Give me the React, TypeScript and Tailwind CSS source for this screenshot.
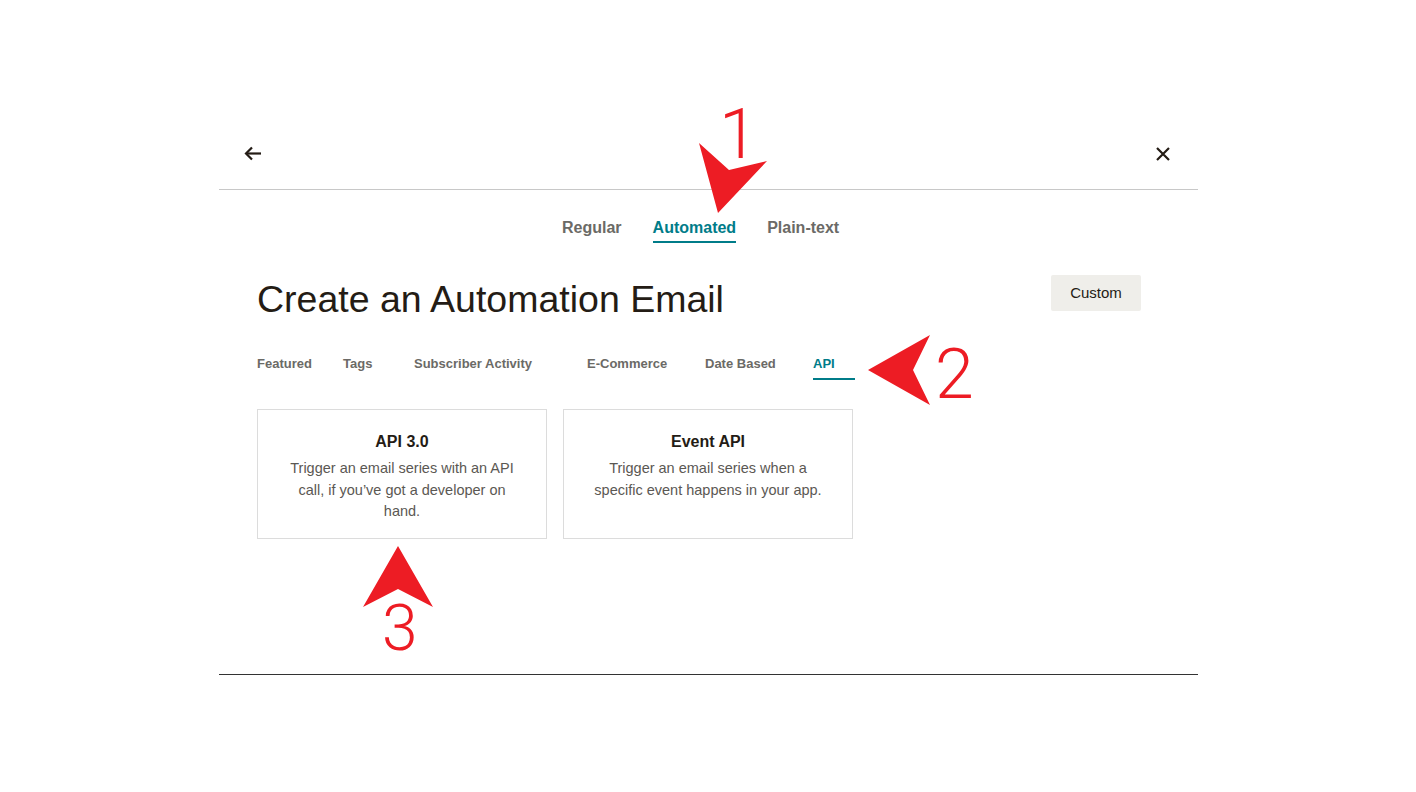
import React from 'react';

const font = { fontFamily: '"Liberation Sans", Arial, sans-serif' };

export default function App() {
  const mainTabs = [
    { name: 'Regular', active: false },
    { name: 'Automated', active: true },
    { name: 'Plain-text', active: false },
  ];

  const subTabs = [
    { name: 'Featured', width: 'w-[86px]' },
    { name: 'Tags', width: 'w-[71px]' },
    { name: 'Subscriber Activity', width: 'w-[173px]' },
    { name: 'E-Commerce', width: 'w-[118px]' },
    { name: 'Date Based', width: 'w-[108px]' },
  ];

  const cards = [
    { title: 'API 3.0', lines: ['Trigger an email series with an API', 'call, if you\u2019ve got a developer on', 'hand.'] },
    { title: 'Event API', lines: ['Trigger an email series when a', 'specific event happens in your app.'] },
  ];

  return (
    <div className="relative min-h-screen w-full bg-white" style={font}>
      <div className="ml-[219px] w-[979px] pt-[118px]">
        {/* header */}
        <div className="flex h-[72px] items-center justify-between border-b border-[#c8c8c8] pl-[25px] pr-[28px]">
          <button className="text-[#241c15]">
            <svg width="17" height="15" viewBox="0 0 17 15" fill="none" stroke="currentColor" strokeWidth="2.2">
              <path d="M2 7.5h15" />
              <path d="M8 1.5L2 7.5l6 6" />
            </svg>
          </button>
          <button className="text-[#241c15]">
            <svg width="14" height="14" viewBox="0 0 14 14" fill="none" stroke="currentColor" strokeWidth="2.2">
              <path d="M1 1l12 12M13 1L1 13" />
            </svg>
          </button>
        </div>

        {/* main tabs */}
        <div className="mt-[28px] flex gap-[31px] pl-[343px]">
          {mainTabs.map((t) => (
            <div
              key={t.name}
              className={`border-b-2 pb-[3px] text-[16px] font-bold leading-[20px] ${
                t.active ? 'border-[#007c89] text-[#007c89]' : 'border-transparent text-[#6b6a66]'
              }`}
            >
              {t.name}
            </div>
          ))}
        </div>

        {/* heading row */}
        <div className="mt-[32px] flex items-start justify-between pl-[38px] pr-[57px]">
          <h1 className="mt-[2px] text-[37.5px] font-normal leading-[44px] text-[#241c15]">Create an Automation Email</h1>
          <button className="h-[36px] w-[90px] rounded-[2px] bg-[#efeeea] text-[15px] text-[#241c15]">Custom</button>
        </div>

        {/* sub tabs */}
        <div className="mt-[34px] flex pl-[38px]">
          {subTabs.map((t) => (
            <div key={t.name} className={`${t.width} pb-[5px] text-[13px] font-bold leading-[18px] text-[#6b6a66]`}>
              {t.name}
            </div>
          ))}
          <div className="w-[42px] border-b-2 border-[#007c89] pb-[5px] text-[13px] font-bold leading-[18px] text-[#007c89]">
            API
          </div>
        </div>

        {/* cards */}
        <div className="mt-[29px] flex gap-[16px] pl-[38px]">
          {cards.map((c) => (
            <div key={c.title} className="h-[130px] w-[290px] border border-[#dcdcdc] bg-white pt-[22px] text-center">
              <div className="text-[16px] font-bold leading-[20px] text-[#241c15]">{c.title}</div>
              <div className="mt-[6px] text-[14.5px] leading-[21.5px] text-[#5b5853]">
                {c.lines.map((l) => (
                  <div key={l}>{l}</div>
                ))}
              </div>
            </div>
          ))}
        </div>

        {/* bottom rule */}
        <div className="mt-[135px] border-t border-[#333333]" />
      </div>

      {/* annotations */}
      <svg className="pointer-events-none absolute left-0 top-0" width="1416" height="792">
        <polygon points="699,143 729,170 767,161 718,213" fill="#ed1c24" />
        <polygon points="868,370 930,335 913,370 930,405" fill="#ed1c24" />
        <polygon points="398,546 363,607 398,589 433,607" fill="#ed1c24" />
        <text x="719" y="158" fill="#ed1c24" fontSize="70" fontWeight="300" fontFamily="Roboto, sans-serif">1</text>
        <text x="935" y="398" fill="#ed1c24" fontSize="70" fontWeight="300" fontFamily="Roboto, sans-serif">2</text>
        <text x="382" y="650" fill="#ed1c24" fontSize="64" fontWeight="300" fontFamily="Roboto, sans-serif">3</text>
      </svg>
    </div>
  );
}
